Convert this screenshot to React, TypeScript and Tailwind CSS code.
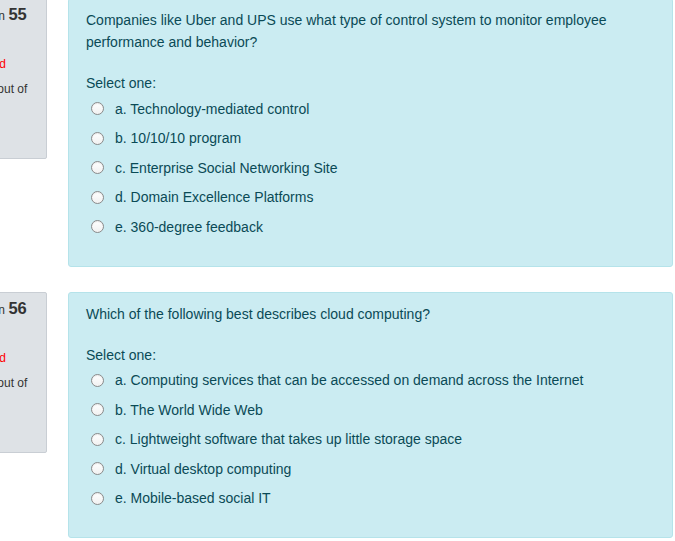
import React from 'react'

type Question = {
  no: number
  text: string
  options: string[]
}

const questions: Question[] = [
  {
    no: 55,
    text: 'Companies like Uber and UPS use what type of control system to monitor employee performance and behavior?',
    options: [
      'a. Technology-mediated control',
      'b. 10/10/10 program',
      'c. Enterprise Social Networking Site',
      'd. Domain Excellence Platforms',
      'e. 360-degree feedback',
    ],
  },
  {
    no: 56,
    text: 'Which of the following best describes cloud computing?',
    options: [
      'a. Computing services that can be accessed on demand across the Internet',
      'b. The World Wide Web',
      'c. Lightweight software that takes up little storage space',
      'd. Virtual desktop computing',
      'e. Mobile-based social IT',
    ],
  },
]

function Radio() {
  return (
    <span className="inline-block w-[13px] h-[13px] rounded-full border border-[#8a8a8a] bg-gradient-to-b from-white to-[#f1f1f1] shadow-[inset_0_1px_1px_rgba(0,0,0,0.08)] shrink-0" />
  )
}

function QuestionBlock({ q }: { q: Question }) {
  return (
    <div className="flex items-start mb-[25px]">
      <div className="ml-[-67px] w-[114px] h-[161px] shrink-0 rounded-[2px] border border-[#c9ced4] bg-[#dee2e6] pt-[3px] pl-[20px] text-[12px] text-[#333]">
        <h3 className="ml-[3px] leading-[24px] whitespace-nowrap">
          Question <span className="text-[16.5px] font-bold">{q.no}</span>
        </h3>
        <div className="mt-[11px] leading-[17px] text-[#f00]">
          Not yet
          <br />
          answered
        </div>
        <div className="mt-[8px] leading-[17px] whitespace-nowrap">
          Marked out of
          <br />
          1.00
        </div>
      </div>
      <div className="ml-[21px] mr-[2px] flex-1 rounded-[3px] border border-[#b5e3ea] bg-[#cbecf2] pt-[10px] pl-[17px] pr-[16px] pb-[24px] text-[14px] leading-[22px] text-[#0a4a56]">
        <div>{q.text}</div>
        <div className="mt-[19px]">Select one:</div>
        <div>
          {q.options.map(o => (
            <div key={o} className="flex items-center h-[29.5px] pl-[5px]">
              <Radio />
              <span className="ml-[11px]">{o}</span>
            </div>
          ))}
        </div>
      </div>
    </div>
  )
}

export default function App() {
  return (
    <div className="w-[675px] h-[541px] overflow-hidden bg-white font-['Liberation_Sans',Arial,sans-serif]">
      <div className="mt-[-2px]">
        {questions.map(q => (
          <QuestionBlock key={q.no} q={q} />
        ))}
      </div>
    </div>
  )
}
